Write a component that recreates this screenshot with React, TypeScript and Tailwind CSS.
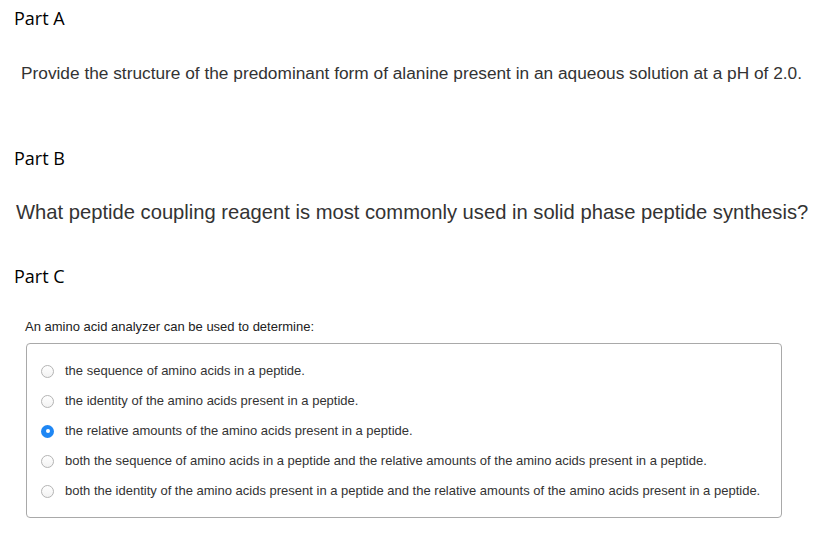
import React from 'react'

const options = [
  'the sequence of amino acids in a peptide.',
  'the identity of the amino acids present in a peptide.',
  'the relative amounts of the amino acids present in a peptide.',
  'both the sequence of amino acids in a peptide and the relative amounts of the amino acids present in a peptide.',
  'both the identity of the amino acids present in a peptide and the relative amounts of the amino acids present in a peptide.',
]

const Radio = ({ checked }: { checked: boolean }) =>
  checked ? (
    <span className="flex h-[13px] w-[13px] shrink-0 items-center justify-center rounded-full bg-[#1f87f4]">
      <span className="h-[4px] w-[4px] rounded-full bg-white" />
    </span>
  ) : (
    <span className="h-[13px] w-[13px] shrink-0 rounded-full border border-[#b4b4b4] bg-gradient-to-b from-white to-[#f2f2f2]" />
  )

const PartTitle = ({ children, className }: { children: React.ReactNode; className: string }) => (
  <h2 className={`pl-[14px] font-['Open_Sans',sans-serif] text-[18px] leading-[24px] text-black ${className}`}>
    {children}
  </h2>
)

export default function App() {
  const selected = 2

  return (
    <div className="min-h-screen w-[824px] bg-white pt-[6px] font-['Liberation_Sans',Arial,sans-serif]">
      {/* Part A */}
      <PartTitle className="">Part A</PartTitle>
      <p className="mt-[33px] pl-[21px] text-[17.3px] leading-[20px] text-[#333]">
        Provide the structure of the predominant form of alanine present in an aqueous solution at a pH of 2.0.
      </p>

      {/* Part B */}
      <PartTitle className="mt-[63px]">Part B</PartTitle>
      <p className="mt-[30px] pl-[16px] text-[20.2px] leading-[24px] text-[#333]">
        What peptide coupling reagent is most commonly used in solid phase peptide synthesis?
      </p>

      {/* Part C */}
      <PartTitle className="mt-[40px]">Part C</PartTitle>
      <p className="mt-[31px] pl-[25px] text-[13px] leading-[16px] text-[#222]">
        An amino acid analyzer can be used to determine:
      </p>

      <div className="ml-[26px] mt-[8px] h-[175px] w-[756px] rounded-[4px] border border-[#a9a9a9] pt-[12px] pl-[14px]">
        {options.map((opt, i) => (
          <label key={i} className="flex h-[30px] items-center gap-[11px] text-[13px] text-[#333]">
            <Radio checked={i === selected} />
            <span>{opt}</span>
          </label>
        ))}
      </div>
    </div>
  )
}
